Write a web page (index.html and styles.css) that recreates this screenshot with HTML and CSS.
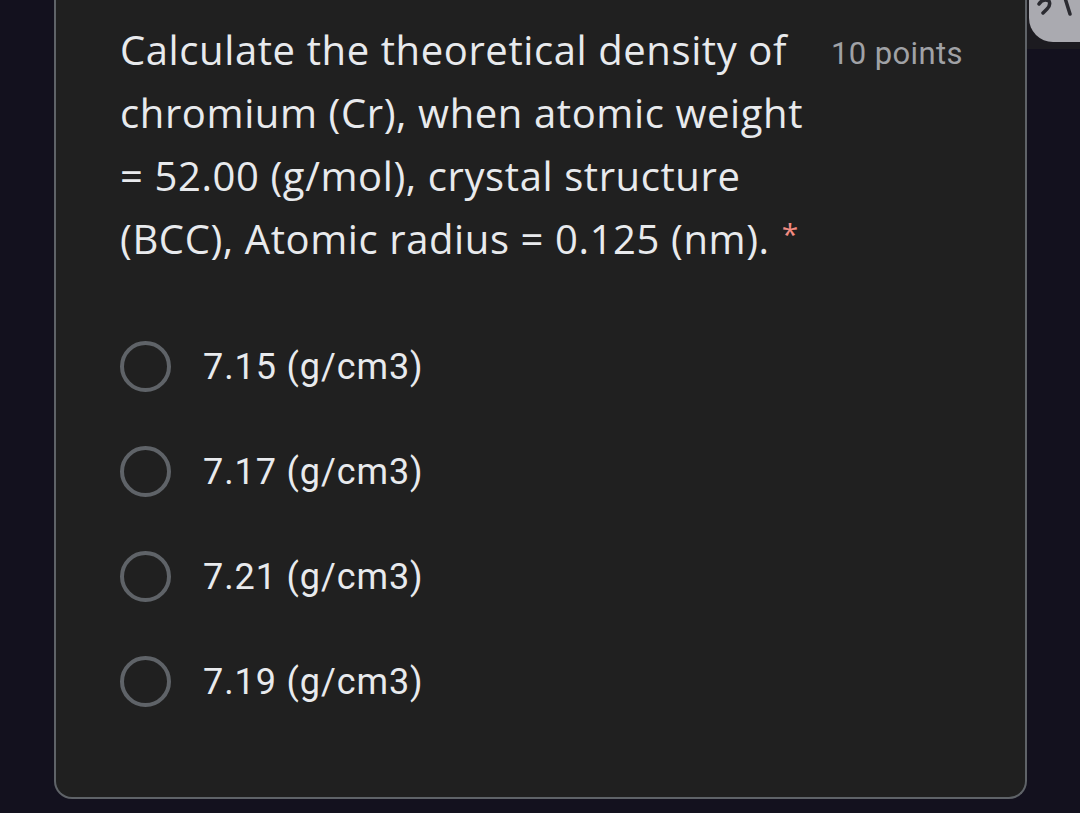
FILE: index.html
```html
<!DOCTYPE html>
<html>
<head>
<meta charset="utf-8">
<link rel="stylesheet" href="styles.css">
</head>
<body>
<div class="page">
  <div class="card">
    <div class="header">
      <div class="title">Calculate the theoretical density of chromium (Cr), when atomic weight = 52.00 (g/mol), crystal structure (BCC), Atomic radius = 0.125 (nm).<span class="req">*</span></div>
      <div class="points">10 points</div>
    </div>
    <div class="options">
      <label class="option"><span class="radio"></span><span class="opt-text">7.15 (g/cm3)</span></label>
      <label class="option"><span class="radio"></span><span class="opt-text">7.17 (g/cm3)</span></label>
      <label class="option"><span class="radio"></span><span class="opt-text">7.21 (g/cm3)</span></label>
      <label class="option"><span class="radio"></span><span class="opt-text">7.19 (g/cm3)</span></label>
    </div>
  </div>
  <div class="corner">
    <svg class="corner-svg" width="53" height="49" viewBox="0 0 53 49">
      <path d="M2 -10 H60 V42 H26 A24 24 0 0 1 2 18 Z" fill="#aaaab0"/>
      <path d="M12 4 Q16 -2 22 1 Q24 5 20 9 L16 13" fill="none" stroke="#2b2b31" stroke-width="3.5" stroke-linecap="round"/>
      <path d="M38 -2 L43 14" fill="none" stroke="#2b2b31" stroke-width="3.5" stroke-linecap="round"/>
    </svg>
  </div>
</div>
</body>
</html>
```

FILE: styles.css
```css
html, body {
  margin: 0;
  padding: 0;
  background: #13111e;
}
.page {
  position: relative;
  width: 1080px;
  height: 813px;
  padding-left: 54px;
  box-sizing: border-box;
}
.card {
  width: 973px;
  height: 799px;
  box-sizing: border-box;
  background: #202020;
  border: 2px solid #5f6368;
  border-top: none;
  border-radius: 0 0 18px 18px;
  padding: 18px 64px 0 64px;
}
.header {
  display: flex;
  align-items: flex-start;
}
.title {
  width: 700px;
  font-family: "Open Sans", sans-serif;
  font-size: 40px;
  line-height: 63px;
  color: #e8eaed;
  letter-spacing: 0.6px;
}
.req {
  display: inline-block;
  color: #f28b82;
  font-size: 30px;
  line-height: 1;
  vertical-align: 9px;
  margin-left: 12px;
}
.points {
  margin-left: auto;
  margin-top: 17px;
  font-family: Roboto, sans-serif;
  font-size: 31px;
  letter-spacing: 0.4px;
  color: #a0a2a6;
  white-space: nowrap;
  margin-right: -2px;
}
.options {
  display: flex;
  flex-direction: column;
  gap: 54px;
  margin-top: 71px;
}
.option {
  display: flex;
  align-items: center;
  height: 51px;
}
.radio {
  width: 43px;
  height: 43px;
  border: 4px solid #5f6368;
  border-radius: 50%;
  flex: none;
}
.opt-text {
  margin-left: 32px;
  font-family: Roboto, sans-serif;
  font-size: 36px;
  letter-spacing: 0.9px;
  color: #e8eaed;
}
.corner {
  position: absolute;
  top: 0;
  right: 0;
  width: 53px;
  height: 49px;
  background: #1c1b20;
}
.corner-svg {
  display: block;
}
```
